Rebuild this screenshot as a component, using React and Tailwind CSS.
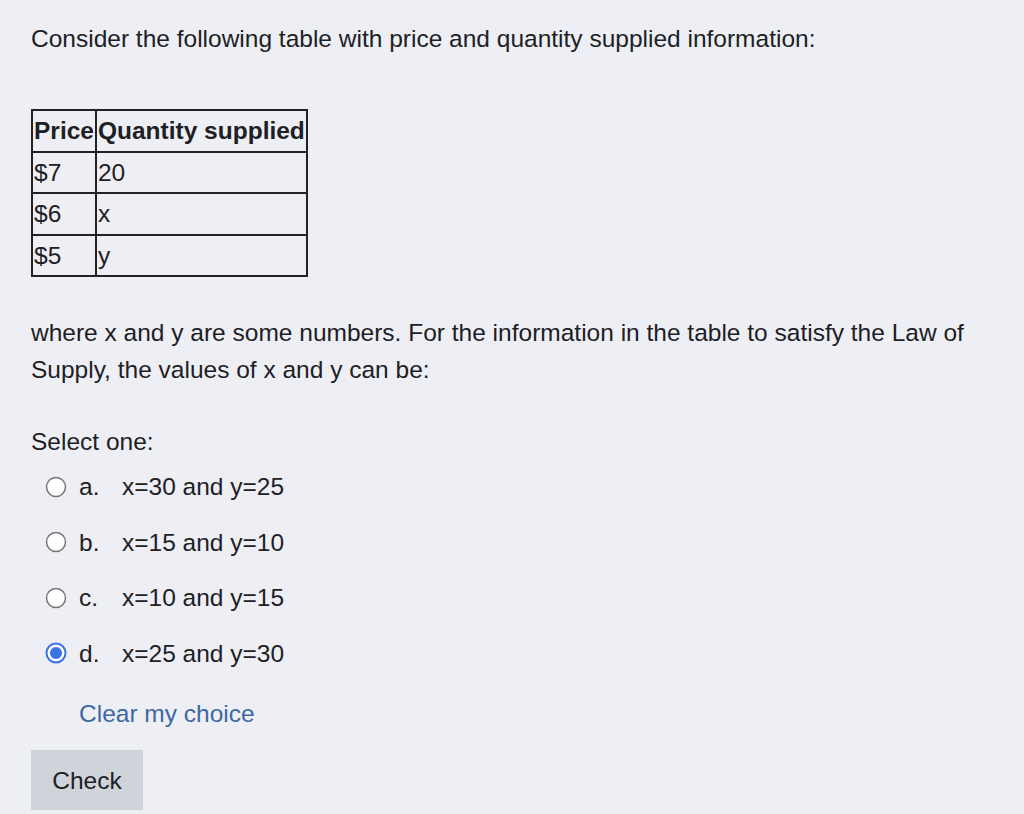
const options = [
  { key: 'a.', text: 'x=30 and y=25' },
  { key: 'b.', text: 'x=15 and y=10' },
  { key: 'c.', text: 'x=10 and y=15' },
  { key: 'd.', text: 'x=25 and y=30', checked: true },
];

const rows = [
  ['$7', '20'],
  ['$6', 'x'],
  ['$5', 'y'],
];

function Radio({ checked }) {
  if (checked) {
    return (
      <svg width="22" height="22" viewBox="0 0 22 22" className="shrink-0">
        <circle cx="11" cy="11" r="9.5" fill="#fff" stroke="#3a73e6" strokeWidth="2" />
        <circle cx="11" cy="11" r="6" fill="#3a73e6" />
      </svg>
    );
  }
  return (
    <svg width="22" height="22" viewBox="0 0 22 22" className="shrink-0">
      <circle cx="11" cy="11" r="9.5" fill="#fff" stroke="#767676" strokeWidth="1.5" />
    </svg>
  );
}

export default function App() {
  return (
    <div
      className="min-h-[814px] bg-[#eeeff4] px-[31px] pt-[20px] text-[24.5px] leading-[37px] text-[#1d2125]"
      style={{ fontFamily: '"Liberation Sans", Arial, sans-serif' }}
    >
      <p>Consider the following table with price and quantity supplied information:</p>

      <table className="mt-[52px] border-collapse border-2 border-[#222]">
        <thead>
          <tr className="h-[41.5px]">
            <th className="border-2 border-[#222] px-[1px] text-left font-bold">Price</th>
            <th className="border-2 border-[#222] px-[1px] text-left font-bold">Quantity supplied</th>
          </tr>
        </thead>
        <tbody>
          {rows.map(([p, q]) => (
            <tr key={p} className="h-[41.5px]">
              <td className="border-2 border-[#222] px-[1px]">{p}</td>
              <td className="border-2 border-[#222] px-[1px]">{q}</td>
            </tr>
          ))}
        </tbody>
      </table>

      <p className="mt-[37px]">
        where x and y are some numbers. For the information in the table to satisfy the Law of Supply, the values of x and
        y can be:
      </p>

      <p className="mt-[35px]">Select one:</p>

      <div className="-mt-[1px] flex flex-col">
        {options.map((o) => (
          <div key={o.key} className="flex h-[55.5px] items-center pl-[14px]">
            <Radio checked={o.checked} />
            <span className="ml-[12px] w-[43px]">{o.key}</span>
            <span>{o.text}</span>
          </div>
        ))}
      </div>

      <p className="mt-[14px] pl-[48px] text-[#3d68a3]">Clear my choice</p>

      <button className="mt-[18px] h-[60px] w-[112px] bg-[#ced4da] text-[24.5px] text-[#1d2125]">Check</button>
    </div>
  );
}
